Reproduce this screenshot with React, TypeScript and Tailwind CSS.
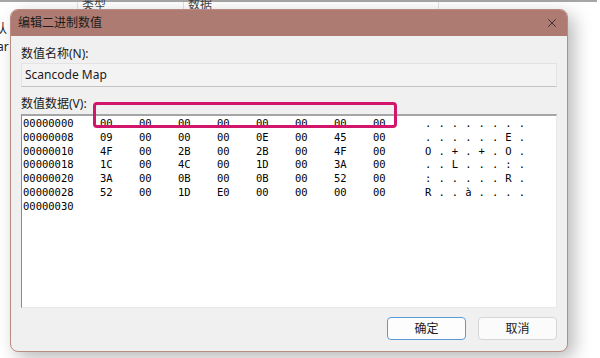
import { X } from "lucide-react";

const rows = [
  { addr: "00000000", bytes: ["00", "00", "00", "00", "00", "00", "00", "00"], ascii: "........" },
  { addr: "00000008", bytes: ["09", "00", "00", "00", "0E", "00", "45", "00"], ascii: "......E." },
  { addr: "00000010", bytes: ["4F", "00", "2B", "00", "2B", "00", "4F", "00"], ascii: "O.+.+.O." },
  { addr: "00000018", bytes: ["1C", "00", "4C", "00", "1D", "00", "3A", "00"], ascii: "..L...:." },
  { addr: "00000020", bytes: ["3A", "00", "0B", "00", "0B", "00", "52", "00"], ascii: ":.....R." },
  { addr: "00000028", bytes: ["52", "00", "1D", "E0", "00", "00", "00", "00"], ascii: "R..à...." },
  { addr: "00000030", bytes: [], ascii: "" },
];

const cjk = "font-['Noto_Sans','Noto_Sans_CJK_SC',sans-serif]";
const mono = "font-['DejaVu_Sans_Mono','Liberation_Mono',monospace]";

export default function App() {
  return (
    <div className={`relative w-[600px] h-[358px] bg-white overflow-hidden ${cjk}`}>
      {/* window behind the dialog */}
      <div className="absolute left-0 top-0 w-[597px] h-[10px] border-t-2 border-[#a6a6a6] bg-white">
        <div className="absolute left-[77px] top-0 h-[10px] border-l border-[#e2e2e2]" />
        <div className="absolute left-[183px] top-0 h-[10px] border-l border-[#e2e2e2]" />
        <div className="absolute left-[438px] top-0 h-[10px] border-l border-[#e2e2e2]" />
        <span className="absolute left-[82px] top-[-4px] text-[12px] leading-[14px] text-[#444]">类型</span>
        <span className="absolute left-[188px] top-[-4px] text-[12px] leading-[14px] text-[#444]">数据</span>
      </div>
      <span className="absolute left-[-5px] top-[20px] text-[12px] text-[#222]">认</span>
      <span className="absolute left-[-3px] top-[38px] text-[12px] text-[#222]">ar</span>

      {/* dialog */}
      <div className="absolute left-[10px] top-[9px] w-[558px] h-[343px] flex flex-col rounded-[8px] border border-[#b98b82] bg-[#f0f0f0] overflow-hidden shadow-[6px_6px_18px_rgba(0,0,0,0.28)]">
        <div className="h-[26px] shrink-0 flex items-center justify-between bg-[#ad7b71] pl-[7px] pr-[8px]">
          <span className="text-[12px] text-[#1b1b1b]">编辑二进制数值</span>
          <X className="w-[14px] h-[14px] text-[#222]" strokeWidth={1.4} />
        </div>

        <div className="flex-1 flex flex-col px-[10px] pt-[10px]">
          <div className="text-[12px] leading-[16px] text-[#1a1a1a]">数值名称(N):</div>
          <div className="mt-[1px] h-[24px] flex items-center px-[3px] bg-[#f3f3f3] border border-[#e3e3e3] border-b-[#c4c4c4] text-[12px] text-[#1a1a1a]">
            Scancode Map
          </div>

          <div className="mt-[9px] text-[12px] leading-[16px] text-[#1a1a1a]">数值数据(V):</div>
          <div className={`mt-[2px] h-[194px] bg-white border-t-2 border-l border-t-[#a5a5a5] border-l-[#8a8a8a] border-r border-b border-r-[#e8e8e8] border-b-[#e8e8e8] pt-[1px] ${mono} text-[10.5px] leading-[13.8px] text-black`}>
            {rows.map((r) => (
              <div key={r.addr} className="flex">
                <span className="w-[78px] shrink-0 pl-[1px]">{r.addr}</span>
                <div className="grid grid-cols-8 w-[312px] shrink-0">
                  {r.bytes.map((b, i) => (
                    <span key={i}>{b}</span>
                  ))}
                </div>
                <div className="ml-[13px] grid grid-cols-8 w-[107px]">
                  {r.ascii.split("").map((c, i) => (
                    <span key={i}>{c}</span>
                  ))}
                </div>
              </div>
            ))}
          </div>

          <div className="mt-[9px] flex justify-end gap-[12px]">
            <button className="w-[79px] h-[23px] rounded-[4px] bg-[#fdfdfd] border border-[#5b9bd5] text-[12px] text-[#1a1a1a]">
              确定
            </button>
            <button className="w-[79px] h-[23px] rounded-[4px] bg-[#fbfbfb] border border-[#d6d6d6] text-[12px] text-[#1a1a1a]">
              取消
            </button>
          </div>
        </div>
      </div>

      {/* highlight annotation */}
      <div className="absolute left-[93px] top-[102px] w-[304px] h-[26px] rounded-[4px] border-[3px] border-[#d2166c]" />
    </div>
  );
}
